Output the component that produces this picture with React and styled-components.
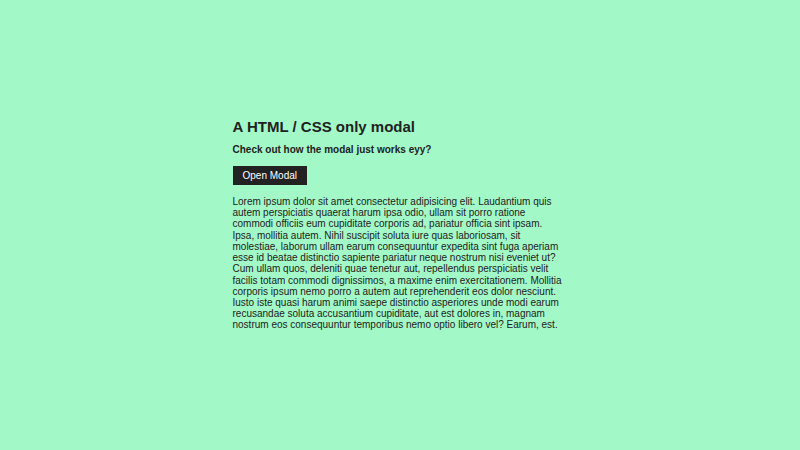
import styled, { createGlobalStyle } from "styled-components";

const GlobalStyle = createGlobalStyle`
  html, body {
    margin: 0;
    padding: 0;
    height: 100%;
  }
  body {
    background: #a3f8c8;
    font-family: "Liberation Sans", Arial, sans-serif;
    color: #1d2320;
  }
  #root {
    height: 100%;
  }
`;

const Page = styled.main`
  height: 100vh;
  display: flex;
  align-items: center;
  justify-content: center;
`;

const Container = styled.div`
  width: 335px;
`;

const Title = styled.h1`
  margin: 0 0 8px;
  font-size: 15px;
  font-weight: 700;
  line-height: 18px;
`;

const Subtitle = styled.h3`
  margin: 0 0 10px;
  font-size: 10px;
  font-weight: 700;
  line-height: 12px;
`;

const OpenButton = styled.button`
  display: block;
  margin: 0 0 10.6px;
  padding: 0 10px;
  height: 19px;
  border: 0;
  border-radius: 0;
  background: #222;
  color: #fff;
  font-family: inherit;
  font-size: 10px;
  line-height: 19px;
  cursor: pointer;
`;

const Text = styled.p`
  margin: 0 0 1px;
  max-width: 331px;
  font-size: 10px;
  line-height: 11.2px;
`;

export default function App() {
  return (
    <>
      <GlobalStyle />
      <Page>
        <Container>
          <Title>A HTML / CSS only modal</Title>
          <Subtitle>Check out how the modal just works eyy?</Subtitle>
          <OpenButton>Open Modal</OpenButton>
          <Text>
            Lorem ipsum dolor sit amet consectetur adipisicing elit. Laudantium quis
            autem perspiciatis quaerat harum ipsa odio, ullam sit porro ratione
            commodi officiis eum cupiditate corporis ad, pariatur officia sint ipsam.
            Ipsa, mollitia autem. Nihil suscipit soluta iure quas laboriosam, sit
            molestiae, laborum ullam earum consequuntur expedita sint fuga aperiam
            esse id beatae distinctio sapiente pariatur neque nostrum nisi eveniet ut?
            Cum ullam quos, deleniti quae tenetur aut, repellendus perspiciatis velit
            facilis totam commodi dignissimos, a maxime enim exercitationem. Mollitia
            corporis ipsum nemo porro a autem aut reprehenderit eos dolor nesciunt.
            Iusto iste quasi harum animi saepe distinctio asperiores unde modi earum
            recusandae soluta accusantium cupiditate, aut est dolores in, magnam
            nostrum eos consequuntur temporibus nemo optio libero vel? Earum, est.
          </Text>
        </Container>
      </Page>
    </>
  );
}
